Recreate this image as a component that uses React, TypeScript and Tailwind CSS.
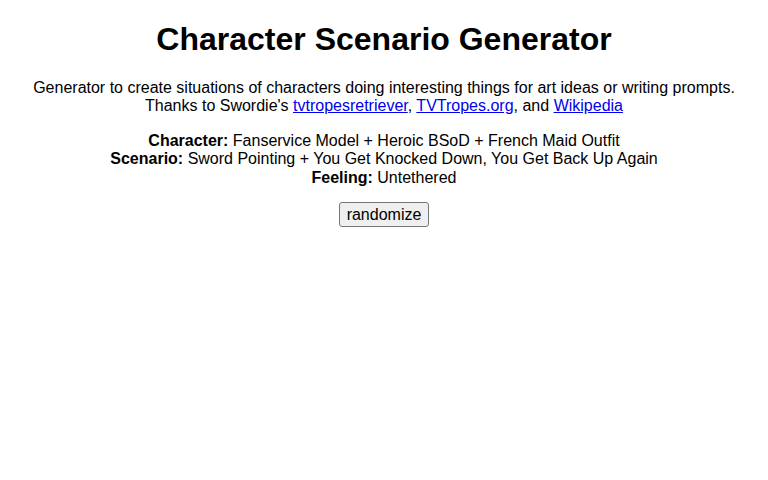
export default function App() {
  return (
    <div
      className="min-h-screen bg-white px-2 text-center text-[16px] leading-[18.4px] text-black"
      style={{ fontFamily: '"Liberation Sans", Arial, sans-serif' }}
    >
      <h1 className="pt-[21px] text-[32px] font-bold leading-[37px]">Character Scenario Generator</h1>
      <p className="mt-[21px]">
        Generator to create situations of characters doing interesting things for art ideas or writing prompts.
        <br />
        Thanks to Swordie's{' '}
        <a href="#" className="text-[#0000ee] underline">
          tvtropesretriever
        </a>
        ,{' '}
        <a href="#" className="text-[#0000ee] underline">
          TVTropes.org
        </a>
        , and{' '}
        <a href="#" className="text-[#0000ee] underline">
          Wikipedia
        </a>
      </p>
      <p className="mt-4">
        <b>Character:</b> Fanservice Model + Heroic BSoD + French Maid Outfit
        <br />
        <b>Scenario:</b> Sword Pointing + You Get Knocked Down, You Get Back Up Again
        <br />
        <b>Feeling:</b> Untethered
      </p>
      <div className="mt-[15px]">
        <button className="h-[25px] rounded-[3px] border border-[#767676] bg-[#efefef] px-[7px] text-[16px] leading-[18px]">
          randomize
        </button>
      </div>
    </div>
  );
}
